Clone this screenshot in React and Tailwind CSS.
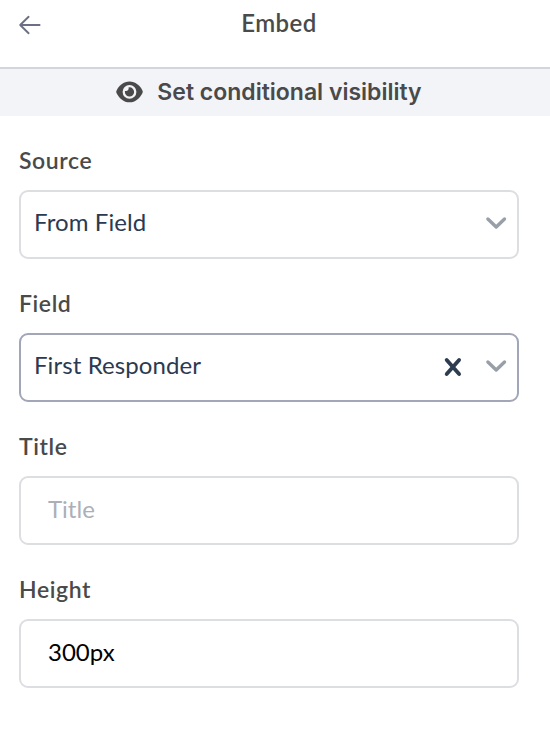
const ChevronIcon = () => (
  <svg className="w-[22px] h-[14px]" fill="none" stroke="#999fa9" viewBox="0 0 22 14">
    <path strokeLinecap="round" strokeLinejoin="round" strokeWidth="3.4" d="M2.9 3L11.2 11L19.5 3" />
  </svg>
);

const ClearIcon = () => (
  <svg className="w-[18px] h-[20px]" fill="none" stroke="#2d3c50" viewBox="0 0 18 20">
    <path strokeLinecap="round" strokeWidth="3.8" d="M2.7 3L15.1 17M15.1 3L2.7 17" />
  </svg>
);

const EyeIcon = () => (
  <svg className="w-[27px] h-6 mr-3.5" viewBox="0 0 27 24">
    <path fill="currentColor" d="M13.5 1.5C7.6 1.5 2.9 5.6.5 10.7a2.6 2.6 0 0 0 0 2.2C2.9 18 7.6 22.3 13.5 22.3S24.1 18 26.5 12.9a2.6 2.6 0 0 0 0-2.2C24.1 5.6 19.4 1.5 13.5 1.5z" />
    <circle cx="13.5" cy="11.9" r="6.9" fill="#f3f4f8" />
    <path fill="currentColor" d="M13.5 7.3a4.6 4.6 0 1 1-4.6 4.6q0-.5.1-1a2.7 2.7 0 0 0 3.5-3.5q.5-.1 1-.1z" />
  </svg>
);

const FieldLabel = ({ htmlFor, children }) => (
  <label htmlFor={htmlFor} className="block h-[30px] mb-[15px] text-[23px] leading-[30px] font-semibold tracking-[0.6px] text-[#4a4a4a]">
    {children}
  </label>
);

const SelectField = ({ label, value, focused, clearable }) => (
  <div>
    <FieldLabel>{label}</FieldLabel>
    <div className={`flex items-center h-[69px] pl-[13px] pr-[10px] rounded-[9px] border-2 bg-white ${focused ? 'border-[#a3a5b8]' : 'border-[#dddee1]'}`}>
      <span className="flex-grow pb-1 text-[24px] leading-[30px] tracking-[0.1px] text-[#2b3a50]">{value}</span>
      {clearable && (
        <button type="button" aria-label="Clear" className="mr-[23px]">
          <ClearIcon />
        </button>
      )}
      <span className="pb-0.5">
        <ChevronIcon />
      </span>
    </div>
  </div>
);

const InputField = ({ id, label, ...props }) => (
  <div>
    <FieldLabel htmlFor={id}>{label}</FieldLabel>
    <input
      id={id}
      type="text"
      className="block w-full h-[69px] px-[27px] pb-1 rounded-[9px] border-2 border-[#dddee1] bg-white text-[24px] leading-[30px] text-black placeholder:text-[#abb0b8]"
      {...props}
    />
  </div>
);

const App = () => (
  <div className="w-full min-h-screen bg-white font-['Lato',sans-serif]">
    <header className="grid grid-cols-[60px_1fr_60px] h-[67px]">
      <button type="button" aria-label="Back" className="self-start pt-[14px] pl-[18px]">
        <svg className="w-6 h-[22px]" fill="none" stroke="#6b7182" viewBox="0 0 24 22">
          <path strokeLinecap="round" strokeLinejoin="round" strokeWidth="1.9" d="M21.6 11H2.2M10.6 2.8L2.2 11l8.4 8.2" />
        </svg>
      </button>
      <h1 className="pt-2 pl-2 text-center text-[24px] leading-[30px] font-semibold tracking-[0.4px] text-[#4a4a4a]">Embed</h1>
    </header>

    <button type="button" className="flex items-center justify-center w-full h-[49px] pr-3 pb-0.5 border-t-2 border-[#d2d6dc] bg-[#f3f4f8] text-[#4a4a4a]">
      <EyeIcon />
      <span className="font-['Inter',sans-serif] text-[23px] leading-[30px] font-semibold">Set conditional visibility</span>
    </button>

    <form className="flex flex-col gap-[29.2px] pt-[28.6px] pl-[19px] pr-[31px]">
      <SelectField label="Source" value="From Field" />
      <SelectField label="Field" value="First Responder" focused clearable />
      <InputField id="title" label="Title" placeholder="Title" />
      <InputField id="height" label="Height" defaultValue="300px" />
    </form>
  </div>
);

export default App;
